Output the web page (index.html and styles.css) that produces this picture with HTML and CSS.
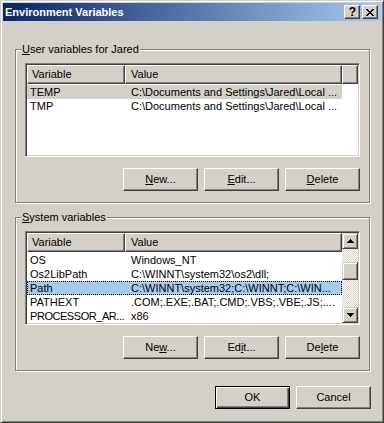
FILE: index.html
```html
<!DOCTYPE html>
<html>
<head>
<meta charset="utf-8">
<title>Environment Variables</title>
<link rel="stylesheet" href="styles.css">
</head>
<body>
<div class="window">
  <div class="titlebar">
    <span class="title">Environment Variables</span>
    <div class="caption-buttons">
      <div class="cap help">?</div>
      <div class="cap close">
        <svg width="8" height="7" viewBox="0 0 8 7" shape-rendering="crispEdges"><path d="M0 0h2v1h-2zM6 0h2v1h-2zM1 1h2v1h-2zM5 1h2v1h-2zM2 2h4v1h-4zM3 3h2v1h-2zM2 4h4v1h-4zM1 5h2v1h-2zM5 5h2v1h-2zM0 6h2v1h-2zM6 6h2v1h-2z" fill="#000"/></svg>
      </div>
    </div>
  </div>
  <div class="content">
    <section class="group">
      <span class="group-label"><u>U</u>ser variables for Jared</span>
      <div class="list">
        <div class="list-main">
          <div class="header">
            <div class="hcell c1">Variable</div>
            <div class="hcell c2">Value</div>
            <div class="hcell filler"></div>
          </div>
          <div class="row sel-inactive"><div class="cell c1">TEMP</div><div class="cell c2">C:\Documents and Settings\Jared\Local ...</div></div>
          <div class="row"><div class="cell c1">TMP</div><div class="cell c2">C:\Documents and Settings\Jared\Local ...</div></div>
        </div>
      </div>
      <div class="btn-row">
        <div class="btn"><span><u>N</u>ew...</span></div>
        <div class="btn"><span><u>E</u>dit...</span></div>
        <div class="btn"><span><u>D</u>elete</span></div>
      </div>
    </section>
    <section class="group group-2">
      <span class="group-label"><u>S</u>ystem variables</span>
      <div class="list">
        <div class="list-main">
          <div class="header">
            <div class="hcell c1">Variable</div>
            <div class="hcell c2">Value</div>
          </div>
          <div class="row"><div class="cell c1">OS</div><div class="cell c2">Windows_NT</div></div>
          <div class="row"><div class="cell c1">Os2LibPath</div><div class="cell c2">C:\WINNT\system32\os2\dll;</div></div>
          <div class="row sel-focus"><div class="cell c1">Path</div><div class="cell c2">C:\WINNT\system32;C:\WINNT;C:\WIN...</div></div>
          <div class="row"><div class="cell c1">PATHEXT</div><div class="cell c2">.COM;.EXE;.BAT;.CMD;.VBS;.VBE;.JS;....</div></div>
          <div class="row"><div class="cell c1 tight">PROCESSOR_AR...</div><div class="cell c2">x86</div></div>
        </div>
        <div class="scrollbar">
          <div class="sb-btn">
            <svg width="7" height="4" viewBox="0 0 7 4" shape-rendering="crispEdges"><path d="M3 0h1v1h-1zM2 1h3v1h-3zM1 2h5v1h-5zM0 3h7v1h-7z" fill="#000"/></svg>
          </div>
          <div class="sb-track"><div class="sb-thumb"></div></div>
          <div class="sb-btn">
            <svg width="7" height="4" viewBox="0 0 7 4" shape-rendering="crispEdges"><path d="M0 0h7v1h-7zM1 1h5v1h-5zM2 2h3v1h-3zM3 3h1v1h-1z" fill="#000"/></svg>
          </div>
        </div>
      </div>
      <div class="btn-row">
        <div class="btn"><span>Ne<u>w</u>...</span></div>
        <div class="btn"><span>Ed<u>i</u>t...</span></div>
        <div class="btn"><span>De<u>l</u>ete</span></div>
      </div>
    </section>
    <div class="dialog-buttons">
      <div class="btn default"><span>OK</span></div>
      <div class="btn"><span>Cancel</span></div>
    </div>
  </div>
</div>
</body>
</html>
```
FILE: styles.css
```css
* { box-sizing: border-box; }
html, body { margin: 0; padding: 0; }
body {
  width: 384px;
  height: 423px;
  overflow: hidden;
  background: #d4d0c8;
  font-family: "Liberation Sans", Arial, sans-serif;
  font-size: 11px;
  color: #000;
}
u { text-decoration: underline; text-underline-offset: 1px; }

.window {
  width: 384px;
  height: 423px;
  background: #d4d0c8;
  border: 1px solid;
  border-color: #d4d0c8 #404040 #404040 #d4d0c8;
  box-shadow: inset 1px 1px #fff, inset -1px -1px #808080;
  padding: 2px;
  display: flex;
  flex-direction: column;
}

.titlebar {
  height: 18px;
  flex: none;
  display: flex;
  align-items: center;
  justify-content: space-between;
  padding: 0 3px 0 2px;
  background: linear-gradient(to right, #0a246a, #a6caf0);
}
.title {
  color: #fff;
  font-weight: bold;
  font-size: 11px;
  line-height: 14px;
  white-space: nowrap;
}
.caption-buttons { display: flex; gap: 2px; }
.cap {
  width: 16px;
  height: 14px;
  background: #d4d0c8;
  border: 1px solid;
  border-color: #fff #404040 #404040 #fff;
  box-shadow: inset -1px -1px #808080;
  display: flex;
  align-items: center;
  justify-content: center;
}
.cap.help {
  font-weight: bold;
  font-size: 12px;
  line-height: 12px;
  padding-left: 1px;
}
.cap.close svg { display: block; }

.content {
  flex: 1;
  display: flex;
  flex-direction: column;
  padding: 28px 11px 0 12px;
}

.group {
  position: relative;
  height: 154px;
  flex: none;
  border: 1px solid #808080;
  box-shadow: inset 1px 1px #fff, 1px 1px #fff;
  padding: 13px 9px 11px 9px;
  display: flex;
  flex-direction: column;
  gap: 11px;
}
.group-2 { margin-top: 14px; }
.group-label {
  position: absolute;
  top: -7px;
  left: 5px;
  padding: 0 1px;
  line-height: 13px;
  background: #d4d0c8;
  white-space: nowrap;
}

.list {
  height: 94px;
  flex: none;
  background: #fff;
  border: 1px solid;
  border-color: #808080 #fff #fff #808080;
  box-shadow: inset 1px 1px #404040, inset -1px -1px #d4d0c8;
  padding: 1px;
  display: flex;
}
.list-main {
  flex: 1;
  min-width: 0;
  overflow: hidden;
}
.header {
  display: flex;
  height: 19px;
  margin-bottom: 1px;
}
.hcell {
  flex: none;
  height: 19px;
  background: #d4d0c8;
  border: 1px solid;
  border-color: #fff #404040 #404040 #fff;
  box-shadow: inset -1px -1px #808080;
  line-height: 16px;
  white-space: nowrap;
}
.hcell.c1 { width: 98px; padding-left: 4px; }
.hcell.c2 { width: 217px; padding-left: 5px; }
.hcell.filler { flex: 1; }

.row {
  display: flex;
  width: 315px;
  height: 14px;
  line-height: 14px;
  white-space: nowrap;
}
.cell { flex: none; overflow: hidden; }
.cell.c1 { width: 98px; padding-left: 3px; }
.cell.c2 { width: 217px; padding-left: 6px; }
.cell.tight { letter-spacing: -0.45px; }
.row.sel-inactive { background: #d4d0c8; }
.row.sel-focus {
  background: #a6caf0;
  outline: 1px dotted #000;
  outline-offset: -1px;
}

.scrollbar {
  width: 16px;
  flex: none;
  display: flex;
  flex-direction: column;
}
.sb-btn, .sb-thumb {
  background: #d4d0c8;
  border: 1px solid;
  border-color: #d4d0c8 #404040 #404040 #d4d0c8;
  box-shadow: inset 1px 1px #fff, inset -1px -1px #808080;
}
.sb-btn {
  height: 16px;
  flex: none;
  display: flex;
  align-items: center;
  justify-content: center;
}
.sb-btn svg { display: block; }
.sb-track {
  flex: 1;
  background: repeating-conic-gradient(#d4d0c8 0 25%, #fff 0 50%) 0 0 / 2px 2px;
}
.sb-thumb {
  height: 18px;
  margin-top: 13px;
}

.btn-row {
  display: flex;
  justify-content: flex-end;
  gap: 6px;
}
.btn {
  width: 75px;
  height: 23px;
  flex: none;
  background: #d4d0c8;
  border: 1px solid;
  border-color: #fff #404040 #404040 #fff;
  box-shadow: inset -1px -1px #808080;
  display: flex;
  align-items: center;
  justify-content: center;
  line-height: 13px;
  white-space: nowrap;
}
.btn.default {
  border-color: #000;
  box-shadow: inset 1px 1px #fff, inset -1px -1px #404040, inset -2px -2px #808080;
}
.dialog-buttons {
  display: flex;
  justify-content: flex-end;
  gap: 6px;
  margin-top: 15px;
  margin-right: -1px;
}
```
